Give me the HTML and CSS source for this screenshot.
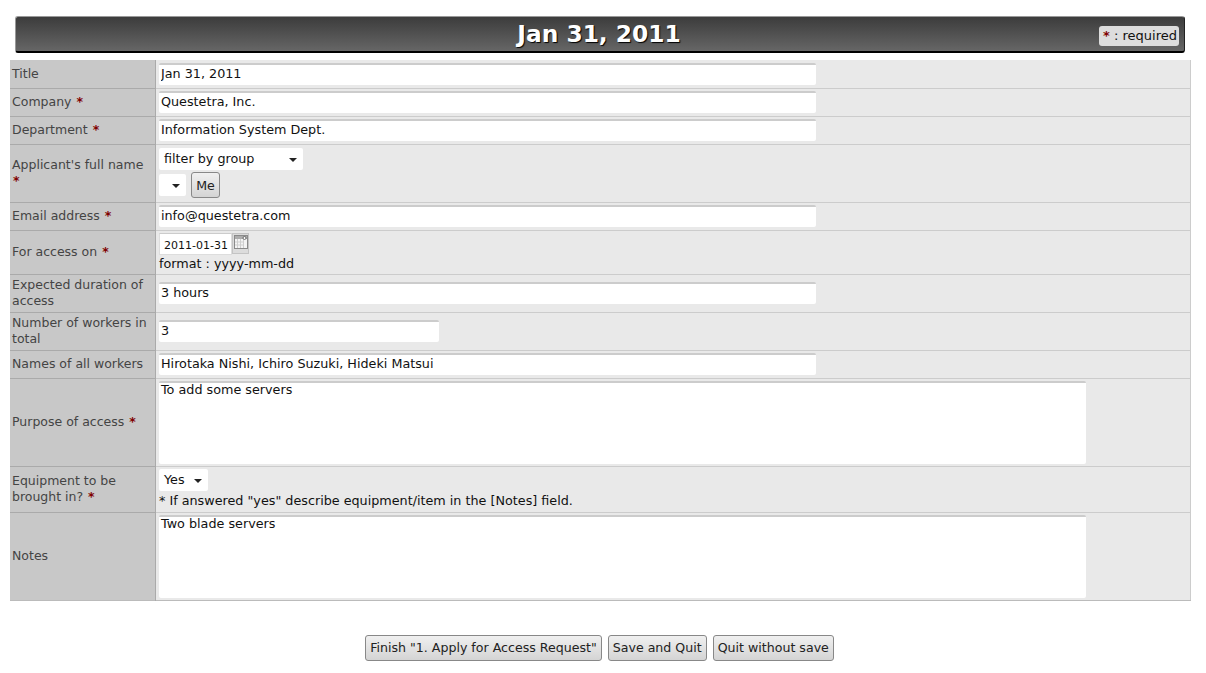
FILE: index.html
```html
<!DOCTYPE html>
<html>
<head>
    <title>Jan 31, 2011</title>
    <link rel="stylesheet" href="styles.css">
</head>
<body>
    <div class="title-bar">
        <h1>Jan 31, 2011</h1>
        <div class="legend"><span class="req">*</span> : required</div>
    </div>

    <table class="form-table">
        <tr>
            <th>Title</th>
            <td><input class="text-long" type="text" value="Jan 31, 2011"></td>
        </tr>
        <tr>
            <th>Company <span class="req">*</span></th>
            <td><input class="text-long" type="text" value="Questetra, Inc."></td>
        </tr>
        <tr>
            <th>Department <span class="req">*</span></th>
            <td><input class="text-long" type="text" value="Information System Dept."></td>
        </tr>
        <tr>
            <th>Applicant's full name <span class="req">*</span></th>
            <td class="select-cell">
                <div class="fake-select group-select">filter by group<span class="arrow"></span></div>
                <div class="me-row">
                    <div class="fake-select empty-select"><span class="arrow"></span></div>
                    <button type="button" class="me-button">Me</button>
                </div>
            </td>
        </tr>
        <tr>
            <th>Email address <span class="req">*</span></th>
            <td><input class="text-long" type="text" value="info@questetra.com"></td>
        </tr>
        <tr>
            <th>For access on <span class="req">*</span></th>
            <td>
                <div class="date-row">
                    <input class="date-input" type="text" value="2011-01-31">
                    <span class="calendar">
                        <svg width="14" height="14" viewBox="0 0 14 14">
                            <rect x="0.5" y="0.5" width="13" height="13" fill="#f4f4f4" stroke="#8a8a8a"/>
                            <rect x="1" y="1" width="12" height="3" fill="#adadad"/>
                            <path d="M1 7h8M1 10h8M3.500 4v9M6.500 4v9M9.500 4v9" stroke="#cfcfcf" fill="none"/>
                            <circle cx="10.500" cy="3" r="1.500" fill="#fff" stroke="#555" stroke-width="0.800"/>
                        </svg>
                    </span>
                </div>
                <div class="hint date-hint">format : yyyy-mm-dd</div>
            </td>
        </tr>
        <tr>
            <th>Expected duration of access</th>
            <td><input class="text-long" type="text" value="3 hours"></td>
        </tr>
        <tr>
            <th>Number of workers in total</th>
            <td><input class="text-short" type="text" value="3"></td>
        </tr>
        <tr>
            <th>Names of all workers</th>
            <td><input class="text-long" type="text" value="Hirotaka Nishi, Ichiro Suzuki, Hideki Matsui"></td>
        </tr>
        <tr>
            <th>Purpose of access <span class="req">*</span></th>
            <td class="area-cell"><textarea>To add some servers</textarea></td>
        </tr>
        <tr>
            <th>Equipment to be brought in? <span class="req">*</span></th>
            <td>
                <div class="fake-select yes-select">Yes<span class="arrow"></span></div>
                <div class="hint">* If answered "yes" describe equipment/item in the [Notes] field.</div>
            </td>
        </tr>
        <tr>
            <th>Notes</th>
            <td class="area-cell"><textarea>Two blade servers</textarea></td>
        </tr>
    </table>

    <div class="buttons">
        <button type="button">Finish "1. Apply for Access Request"</button>
        <button type="button">Save and Quit</button>
        <button type="button">Quit without save</button>
    </div>
</body>
</html>
```

FILE: styles.css
```css
body {
    margin: 0;
    padding: 16px 15px 0 10px;
    font-family: "DejaVu Sans", Verdana, sans-serif;
    font-size: 12.500px;
    color: #111;
    background-color: #fff;
}

.title-bar {
    display: flex;
    align-items: center;
    justify-content: center;
    position: relative;
    box-sizing: border-box;
    height: 37px;
    margin: 0 6px 7px 5px;
    padding: 0 2px 2px 0;
    background: linear-gradient(#3c3c3c, #666);
    border: 1px solid #999;
    border-bottom: 2px solid #000;
    border-right-color: #222;
    border-radius: 3px;
}

h1 {
    margin: 0;
    font-size: 23.300px;
    font-weight: bold;
    color: #fff;
    text-shadow: 1px 1px 1px #000;
}

.legend {
    position: absolute;
    right: 5px;
    top: 9px;
    padding: 2px 2px 2px 3px;
    background-color: #ddd;
    border-radius: 3px;
    font-size: 13px;
    line-height: 16px;
}

.req {
    margin-left: 1px;
    color: #800000;
    font-weight: bold;
}

.form-table {
    width: 1181px;
    border-collapse: collapse;
    border-right: 1px solid #ccc;
    border-bottom: 1px solid #bbb;
}

th, td {
    border-bottom: 1px solid #ccc;
}

tr:last-child th, tr:last-child td {
    border-bottom: none;
}

th {
    width: 141px;
    box-sizing: content-box;
    padding: 2px 2px 3px;
    border-bottom-color: #aaa;
    border-right: 1px solid #aaa;
    background-color: #c8c8c8;
    color: #444;
    font-weight: normal;
    text-align: left;
    line-height: 16px;
}

td {
    padding: 2px 3px 3px;
    background-color: #e9e9e9;
    font-size: 12.750px;
}

tr:first-child td {
    padding-top: 3px;
}

.select-cell {
    padding-top: 3px;
}

.area-cell {
    padding-bottom: 2px;
}

input, textarea {
    display: block;
    box-sizing: border-box;
    margin: 0;
    padding: 0 2px 3px;
    font-family: inherit;
    font-size: inherit;
    color: #111;
    background-color: #fff;
    border: none;
    border-top: 2px solid #ccc;
    border-radius: 2px;
}

.text-long {
    width: 657px;
    height: 22px;
}

.text-short {
    width: 280px;
    height: 22px;
}

textarea {
    width: 927px;
    height: 83px;
    resize: none;
    overflow: hidden;
    line-height: 14px;
}

.fake-select {
    position: relative;
    box-sizing: border-box;
    height: 22px;
    padding: 0 5px;
    line-height: 21px;
    background-color: #fff;
    border-radius: 2px;
}

.group-select {
    width: 144px;
}

.empty-select {
    width: 27px;
}

.yes-select {
    width: 49px;
    margin-bottom: 2px;
}

.arrow {
    position: absolute;
    right: 6px;
    top: 10px;
    border-left: 4px solid transparent;
    border-right: 4px solid transparent;
    border-top: 4px solid #222;
}

.me-row {
    display: flex;
    align-items: center;
    gap: 5px;
    margin-top: 2px;
    margin-bottom: 1px;
}

button {
    box-sizing: border-box;
    height: 26px;
    padding: 0 4px 2px;
    font-family: inherit;
    font-size: 12.600px;
    color: #222;
    background: linear-gradient(#f0f0f0, #d4d4d4);
    border: 1px solid #888;
    border-radius: 3px;
}

.me-button {
    width: 29px;
    padding: 0;
}

.date-row {
    display: flex;
    margin-bottom: 1px;
}

.date-input {
    width: 73px;
    height: 22px;
    padding: 2px 0 0 4px;
    font-size: 11px;
    border: 1px solid #ddd;
    border-top: 1px solid #ccc;
    border-radius: 0;
}

.calendar {
    display: flex;
    align-items: flex-start;
    justify-content: center;
    box-sizing: border-box;
    width: 17px;
    height: 21px;
    padding-top: 1px;
    background-color: #dcdcdc;
    border: 1px solid #c4c4c4;
}

.hint {
    line-height: 16px;
}

.date-hint {
    line-height: 15px;
}

.buttons {
    display: flex;
    justify-content: center;
    gap: 6px;
    margin-top: 34px;
    padding-right: 2px;
}
```
